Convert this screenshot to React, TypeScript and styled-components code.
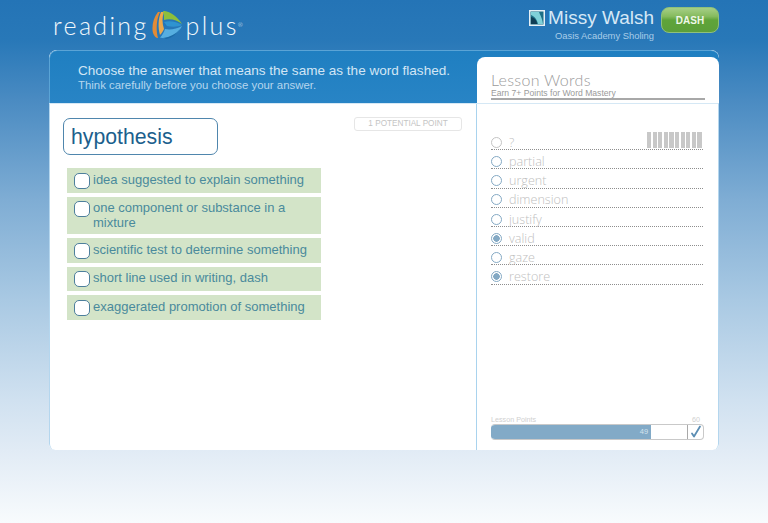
import React from 'react'
import styled, { createGlobalStyle } from 'styled-components'

const GlobalStyle = createGlobalStyle`
  html, body {
    margin: 0;
    padding: 0;
    height: 523px;
    overflow: hidden;
  }
  body {
    font-family: "Liberation Sans", Arial, sans-serif;
    background: linear-gradient(180deg, #2474b6 0px, #2878b8 40px, #4a8bc2 100px, #7fadd4 200px, #a9c9e3 300px, #d0e1f0 400px, #e1ebf5 450px, #f8fbfd 523px);
  }
`

const Page = styled.div`
  width: 670px;
  margin-left: 49px;
`

const TopBar = styled.header`
  height: 50px;
  display: flex;
  justify-content: space-between;
  align-items: flex-start;
`

const Logo = styled.div`
  display: flex;
  align-items: center;
  gap: 3.5px;
  margin: 11px 0 0 4px;
  height: 28px;
  color: #f2f8fc;
  font-family: Lato, sans-serif;
  font-weight: 300;
  font-size: 25px;
  letter-spacing: 2.35px;
`

const LogoWord = styled.span`
  position: relative;
  top: 0;
`

const Registered = styled.sup`
  font-size: 6px;
  position: relative;
  top: -8px;
  vertical-align: baseline;
  letter-spacing: 0;
  margin-left: -1px;
`

const UserBlock = styled.div`
  display: flex;
  align-items: flex-start;
  gap: 7px;
  margin-top: 7px;
`

const UserText = styled.div`
  display: flex;
  flex-direction: column;
  align-items: flex-end;
`

const UserName = styled.div`
  display: flex;
  align-items: center;
  gap: 3px;
  color: #d6e8f6;
  font-size: 19px;
  line-height: 22px;
`

const School = styled.div`
  color: #a9cde8;
  font-size: 9.4px;
  line-height: 11px;
  margin-top: 1px;
`

const DashButton = styled.button`
  width: 58px;
  height: 26px;
  padding: 0;
  border: 1px solid #8fc07a;
  border-radius: 8px;
  background: linear-gradient(180deg, #a6cf86 0%, #86bb5e 35%, #5fa43a 50%, #5c9f3a 100%);
  color: #f0f7e8;
  font-family: "Liberation Sans", Arial, sans-serif;
  font-size: 10px;
  font-weight: 700;
`

const Panel = styled.main`
  height: 400px;
  border-radius: 8px 8px 6px 6px;
  overflow: hidden;
  background: #ffffff;
  display: flex;
  flex-direction: column;
`

const PanelHead = styled.div`
  height: 53px;
  flex: none;
  display: flex;
  justify-content: space-between;
  background: linear-gradient(180deg, #1f7fc1 0%, #2884c5 100%);
  border-top: 1px solid #5aa4d6;
  border-left: 1px solid #5aa4d6;
  border-radius: 8px 8px 0 0;
  box-sizing: border-box;
`

const Instructions = styled.div`
  padding: 12px 0 0 28px;
  color: #d2e6f5;
`

const InstructionMain = styled.div`
  font-size: 13.55px;
  line-height: 16px;
`

const InstructionSub = styled.div`
  font-size: 11.4px;
  line-height: 13px;
  color: #b5d6ee;
`

const WordsTab = styled.div`
  width: 242px;
  margin-top: 6px;
  padding: 14px 14px 0 14px;
  background: #ffffff;
  border-radius: 8px 8px 0 0;
  box-sizing: border-box;
`

const WordsTitle = styled.div`
  font-family: Lato, sans-serif;
  font-weight: 300;
  font-size: 16px;
  letter-spacing: 0.3px;
  line-height: 18px;
  color: #9b9b9b;
`

const WordsHint = styled.div`
  font-size: 8.6px;
  line-height: 9px;
  color: #9a9a9a;
  border-bottom: 2px solid #a8a8a8;
`

const PanelBody = styled.div`
  flex: 1;
  display: flex;
  border-left: 1px solid #b4d6ee;
  border-right: 1px solid #b4d6ee;
  border-top: 1px solid #d5e8f5;
  border-radius: 0 0 6px 6px;
`

const QuizColumn = styled.section`
  width: 426px;
  flex: none;
  box-sizing: border-box;
  padding: 14px 14px 0 13px;
  position: relative;
`

const PointsTag = styled.div`
  position: absolute;
  top: 13px;
  right: 14px;
  width: 108px;
  height: 14px;
  box-sizing: border-box;
  border: 1px solid #e6e6e6;
  border-radius: 3px;
  color: #c4c4c4;
  font-size: 8.2px;
  line-height: 12px;
  text-align: center;
`

const WordBox = styled.div`
  width: 155px;
  height: 37px;
  box-sizing: border-box;
  border: 1px solid #4f86ad;
  border-radius: 7px;
  padding-left: 7px;
  color: #1c5f8d;
  font-size: 21.25px;
  line-height: 36px;
`

const AnswerList = styled.ul`
  list-style: none;
  margin: 13px 0 0 4px;
  padding: 0;
  width: 254px;
  display: flex;
  flex-direction: column;
  gap: 4px;
`

const Answer = styled.li`
  display: flex;
  align-items: flex-start;
  gap: 3px;
  box-sizing: border-box;
  min-height: 24.5px;
  padding: 3.5px 8px 4px 7px;
  background: #d3e4c8;
  color: #4a8a9c;
  font-size: 13px;
  line-height: 15px;
`

const CheckBox = styled.span`
  flex: none;
  width: 16px;
  height: 16px;
  margin-top: 1px;
  box-sizing: border-box;
  background: #ffffff;
  border: 1px solid #4d7f9c;
  border-radius: 5px;
`

const WordsColumn = styled.aside`
  flex: 1;
  display: flex;
  flex-direction: column;
  border-left: 1px solid #a9d3ee;
  padding: 0 14px 10.5px 14px;
`

const WordList = styled.ul`
  list-style: none;
  margin: 27px 1px 0 0;
  padding: 0;
`

const WordRow = styled.li`
  height: 19.2px;
  box-sizing: border-box;
  padding-top: 4.5px;
  display: flex;
  align-items: center;
  gap: 7px;
  border-bottom: 1px dotted #8e8e8e;
  color: #c0c0c0;
  font-family: "Open Sans", sans-serif;
  font-weight: 300;
  font-size: 12.6px;
`

const Radio = styled.span<{ $muted?: boolean; $picked?: boolean }>`
  flex: none;
  width: 11px;
  height: 11px;
  box-sizing: border-box;
  border-radius: 50%;
  border: ${p => (p.$muted ? '1px solid #c4c4c4' : '1.5px solid #84a9c4')};
  background: ${p => (p.$picked ? 'radial-gradient(circle, #84a9c4 0 3px, #fff 3.5px)' : '#fff')};
`

const Ticks = styled.div`
  margin: -4.7px 1.5px 0 auto;
  height: 16px;
  display: flex;
  gap: 1.4px;
`

const Tick = styled.span`
  width: 4.2px;
  background: #c8c8c8;
`

const PointsBlock = styled.div`
  margin-top: auto;
`

const PointsLabels = styled.div`
  display: flex;
  justify-content: space-between;
  padding-right: 4px;
  color: #d0d0d0;
  font-size: 7.2px;
  line-height: 9px;
`

const PointsBar = styled.div`
  height: 16px;
  width: 213px;
  box-sizing: border-box;
  display: flex;
  border: 1px solid #c9c9c9;
  border-left: 0;
  border-radius: 4px;
  overflow: hidden;
`

const PointsTrack = styled.div`
  flex: 1;
  background: #fff;
`

const PointsFill = styled.div`
  height: 100%;
  background: #82aac7;
  color: #d5e3ee;
  font-size: 7.5px;
  line-height: 14px;
  text-align: right;
  padding-right: 3px;
  box-sizing: border-box;
`

const PointsCheck = styled.div`
  width: 16px;
  flex: none;
  box-sizing: border-box;
  border-left: 1px solid #a9a9a9;
  display: flex;
  align-items: center;
  justify-content: center;
`

const LogoMark = () => (
  <svg width="30" height="28" viewBox="0 0 30 28" fill="none">
    <path d="M6 1C1 7-.5 16 1 22c1 3 3 5 5 5C4 20 4 9 8 1z" fill="#e38b35" />
    <path d="M9 1C6 8 6 17 8 24c2-2 3-4 4-6-2-6-2-12 0-17z" fill="#eda84a" />
    <path d="M11 0c6-.5 14 5 19 13-5-4-12-6-18-4 0-3 0-6-1-9z" fill="#8dbf3c" />
    <path d="M12 11c6-2 13 0 18 3-4 2-10 2-15 1z" fill="#2f93d0" />
    <path d="M13 18c5 1 12 0 17-3-3 6-9 11-16 12-2 .5-4 0-6-.5 2-1.500 4-5.500 5-8.500z" fill="#56aee0" />
    <path d="M11 27c7-1 13-4 17-9-3 5-8 9-14 10z" fill="#1c6ca8" />
  </svg>
)

const Avatar = () => (
  <svg width="16" height="16" viewBox="0 0 16 16">
    <rect width="16" height="16" fill="#e6f0f6" />
    <rect x="1.5" y="1.5" width="13" height="13" fill="#1c6f86" />
    <path d="M2 2h8c1 3 3 5 4 12H9C8 9 5 6 2 5z" fill="#7fd0d8" />
    <path d="M8 14c0-3-2-6-6-7v7z" fill="#0f3d55" />
  </svg>
)

const answers = [
  'idea suggested to explain something',
  'one component or substance in a mixture',
  'scientific test to determine something',
  'short line used in writing, dash',
  'exaggerated promotion of something',
]

const words = [
  { label: 'partial' },
  { label: 'urgent' },
  { label: 'dimension' },
  { label: 'justify' },
  { label: 'valid', picked: true },
  { label: 'gaze' },
  { label: 'restore', picked: true },
]

export default function App() {
  return (
    <>
      <GlobalStyle />
      <Page>
        <TopBar>
          <Logo>
            <LogoWord>reading</LogoWord>
            <LogoMark />
            <LogoWord>plus<Registered>®</Registered></LogoWord>
          </Logo>
          <UserBlock>
            <UserText>
              <UserName><Avatar />Missy Walsh</UserName>
              <School>Oasis Academy Sholing</School>
            </UserText>
            <DashButton>DASH</DashButton>
          </UserBlock>
        </TopBar>
        <Panel>
          <PanelHead>
            <Instructions>
              <InstructionMain>Choose the answer that means the same as the word flashed.</InstructionMain>
              <InstructionSub>Think carefully before you choose your answer.</InstructionSub>
            </Instructions>
            <WordsTab>
              <WordsTitle>Lesson Words</WordsTitle>
              <WordsHint>Earn 7+ Points for Word Mastery</WordsHint>
            </WordsTab>
          </PanelHead>
          <PanelBody>
            <QuizColumn>
              <PointsTag>1 POTENTIAL POINT</PointsTag>
              <WordBox>hypothesis</WordBox>
              <AnswerList>
                {answers.map(text => (
                  <Answer key={text}>
                    <CheckBox />
                    <span>{text}</span>
                  </Answer>
                ))}
              </AnswerList>
            </QuizColumn>
            <WordsColumn>
              <WordList>
                <WordRow>
                  <Radio $muted />
                  ?
                  <Ticks>
                    {Array.from({ length: 10 }, (_, i) => <Tick key={i} />)}
                  </Ticks>
                </WordRow>
                {words.map(w => (
                  <WordRow key={w.label}>
                    <Radio $picked={w.picked} />
                    {w.label}
                  </WordRow>
                ))}
              </WordList>
              <PointsBlock>
                <PointsLabels><span>Lesson Points</span><span>60</span></PointsLabels>
                <PointsBar>
                  <PointsTrack>
                    <PointsFill style={{ width: `${(49 / 60) * 100}%` }}>49</PointsFill>
                  </PointsTrack>
                  <PointsCheck>
                    <svg width="12" height="13" viewBox="0 0 12 13" fill="none">
                      <path d="M2 8.500l2 3L10 1.500" stroke="#5b8db3" strokeWidth="1.800" strokeLinecap="round" strokeLinejoin="round" />
                    </svg>
                  </PointsCheck>
                </PointsBar>
              </PointsBlock>
            </WordsColumn>
          </PanelBody>
        </Panel>
      </Page>
    </>
  )
}
